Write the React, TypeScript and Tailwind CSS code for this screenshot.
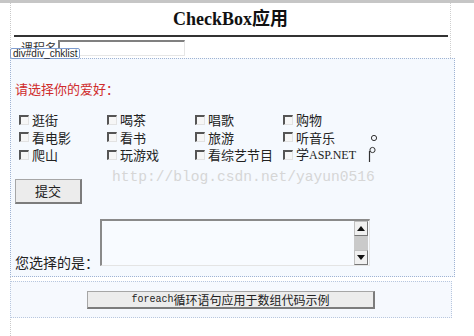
import React from "react";

const CJK = '"Noto Sans CJK SC", "Liberation Sans", sans-serif';

function Box() {
  return (
    <span className="inline-block w-[10px] h-[10px] shrink-0 border-t-2 border-l-2 border-b border-r border-t-[#555] border-l-[#555] border-b-[#e2e2e2] border-r-[#e2e2e2] bg-[#f6f6f6]" />
  );
}

function Item({ label }: { label: React.ReactNode }) {
  return (
    <div className="flex items-center h-[17.5px] gap-[3px] text-[13px] leading-[17px] text-[#222] whitespace-nowrap">
      <Box />
      <span>{label}</span>
    </div>
  );
}

const rows: React.ReactNode[][] = [
  ["逛街", "喝茶", "唱歌", "购物"],
  ["看电影", "看书", "旅游", "听音乐"],
  [
    "爬山",
    "玩游戏",
    "看综艺节目",
    <span key="asp">
      学<span style={{ fontFamily: '"Liberation Serif", serif' }} className="text-[12px]">ASP.NET</span>
    </span>,
  ],
];

export default function App() {
  return (
    <div
      className="w-[474px] h-[336px] bg-white overflow-hidden border-t-[3px] border-[#c6c6c6] relative"
      style={{ fontFamily: CJK }}
    >
      <div className="ml-[10px] w-[445px] h-full border-l border-dotted border-[#c9c9c9]">
        {/* header */}
        <div className="w-[440px] h-[55px] border-r border-dotted border-[#cfcfcf]">
          <div
            className="h-[32px] pt-[3px] text-center text-[18px] font-bold leading-[26px] text-[#111]"
            style={{ fontFamily: '"Liberation Serif", "Noto Sans CJK SC", serif' }}
          >
            CheckBox应用
          </div>
          <div className="ml-[3px] w-[434px] h-[2px] bg-[#333]" />
          <div className="flex items-center mt-[3px] h-[16px]">
            <span className="ml-[10px] w-[37px] text-[12px] leading-[14px] text-[#333]">课程名</span>
            <span className="w-[127px] h-[16px] border-t-2 border-l-2 border-b border-r border-t-[#808080] border-l-[#808080] border-b-[#e6e6e6] border-r-[#e6e6e6] bg-white" />
          </div>
        </div>

        {/* main box */}
        <div className="-ml-px w-[445px] h-[219px] border border-dotted border-[#9fb3d3] bg-[#f5f9fe] relative">
          <div className="mt-[21px] pl-[4px] text-[13px] leading-[18px] text-[#d02c2c]">请选择你的爱好：</div>
          <div className="mt-[13px] pl-[8px] grid grid-cols-[88px_88px_88px_88px_20px]">
            {rows.map((r, ri) => (
              <React.Fragment key={ri}>
                {r.map((l, ci) => (
                  <Item key={ci} label={l} />
                ))}
                <div className="h-[17.5px] relative">
                  {ri === 1 && (
                    <svg className="absolute left-[-1px] top-[5px]" width="8" height="8" viewBox="0 0 8 8">
                      <circle cx="4" cy="4" r="2.6" fill="none" stroke="#333" strokeWidth="1" />
                    </svg>
                  )}
                  {ri === 2 && (
                    <svg className="absolute left-[-4px] top-[0px]" width="10" height="18" viewBox="0 0 10 18">
                      <circle cx="5.5" cy="4" r="2.6" fill="none" stroke="#333" strokeWidth="1" />
                      <path d="M2.5 5 L2.5 16" stroke="#333" strokeWidth="1.2" />
                    </svg>
                  )}
                </div>
              </React.Fragment>
            ))}
          </div>

          <div
            className="absolute left-[101px] top-[110px] text-[14.6px] leading-[16px] text-[#d6d6d6] whitespace-nowrap pointer-events-none"
            style={{ fontFamily: '"Liberation Mono", monospace' }}
          >
            http://blog.csdn.net/yayun0516
          </div>

          <div className="mt-[15px] ml-[4px] w-[67px] h-[25px] flex items-center justify-center bg-[#ececec] border border-[#a6a6a6] border-b-2 border-r-2 border-b-[#7c7c7c] border-r-[#7c7c7c] text-[13px] text-[#222]">
            提交
          </div>

          <div className="mt-[15px] ml-[4px] flex items-end">
            <span className="-mb-[5px] w-[85px] text-[14px] leading-[18px] text-[#222]">您选择的是：</span>
            <div className="w-[270px] h-[47px] flex border-t-2 border-l-2 border-b border-r border-t-[#8a8a8a] border-l-[#8a8a8a] border-b-[#e4e4e4] border-r-[#e4e4e4] bg-[#f8fbff]">
              <div className="flex-1" />
              <div className="w-[14px] mr-[1px] flex flex-col">
                <div className="h-[15px] flex items-center justify-center bg-[#f0f0f0] border border-[#c0c0c0] border-b-[#777] border-r-[#777]">
                  <svg width="8" height="5" viewBox="0 0 8 5"><path d="M0 5 L4 0 L8 5 Z" fill="#111" /></svg>
                </div>
                <div className="flex-1 bg-[#cacaca]" />
                <div className="h-[15px] flex items-center justify-center bg-[#f0f0f0] border border-[#c0c0c0] border-b-[#777] border-r-[#777]">
                  <svg width="8" height="5" viewBox="0 0 8 5"><path d="M0 0 L8 0 L4 5 Z" fill="#111" /></svg>
                </div>
              </div>
            </div>
          </div>
        </div>

        {/* second box */}
        <div className="-ml-px mt-[4px] w-[442px] h-[37px] border border-dotted border-[#b8c7de] bg-[#f6f9fe] flex justify-center pt-[9px]">
          <div className="w-[288px] h-[18px] flex items-center justify-center bg-[#ececec] border border-[#a6a6a6] border-b-2 border-r-2 border-b-[#7c7c7c] border-r-[#7c7c7c] text-[12px] leading-[16px] text-[#222]">
            <span className="text-[10px]" style={{ fontFamily: '"Liberation Mono", monospace' }}>foreach</span>
            <span>循环语句应用于数组代码示例</span>
          </div>
        </div>
      </div>

      {/* element tag overlay */}
      <div
        className="absolute left-[10px] top-[45px] h-[11px] px-[2px] border border-[#7f9dd0] rounded-[2px] bg-white text-[10px] leading-[9px] text-[#222]"
        style={{ fontFamily: '"Liberation Sans", sans-serif' }}
      >
        div#div_chklist
      </div>
    </div>
  );
}
